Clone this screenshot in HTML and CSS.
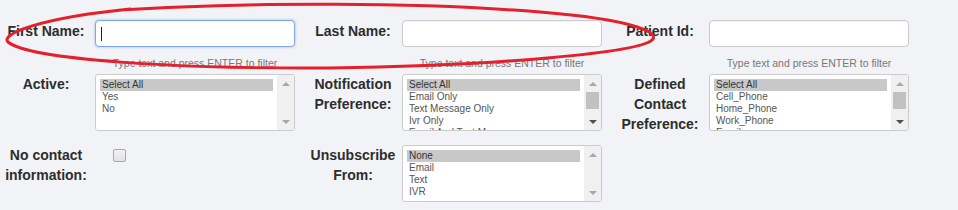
FILE: index.html
```html
<!DOCTYPE html>
<html>
<head>
<meta charset="utf-8">
<link rel="stylesheet" href="styles.css">
</head>
<body>
<div class="page">
  <div class="row r1">
    <div class="group">
      <div class="lbl">First Name:</div>
      <div class="field">
        <div class="input-wrap"><div class="text focus"></div><span class="caret"></span></div>
        <div class="help">Type text and press ENTER to filter</div>
      </div>
    </div>
    <div class="group">
      <div class="lbl">Last Name:</div>
      <div class="field">
        <div class="input-wrap"><div class="text"></div></div>
        <div class="help">Type text and press ENTER to filter</div>
      </div>
    </div>
    <div class="group">
      <div class="lbl">Patient Id:</div>
      <div class="field">
        <div class="input-wrap"><div class="text"></div></div>
        <div class="help">Type text and press ENTER to filter</div>
      </div>
    </div>
  </div>

  <div class="row r2">
    <div class="group">
      <div class="lbl">Active:</div>
      <div class="field">
        <div class="listbox">
          <ul class="opts"><li class="sel">Select All</li><li>Yes</li><li>No</li></ul>
          <div class="sb"><span class="arr"><i class="up"></i></span><span class="track"></span><span class="arr"><i class="down"></i></span></div>
        </div>
      </div>
    </div>
    <div class="group">
      <div class="lbl">Notification<br>Preference:</div>
      <div class="field">
        <div class="listbox">
          <ul class="opts"><li class="sel">Select All</li><li>Email Only</li><li>Text Message Only</li><li>Ivr Only</li><li>Email And Text Message</li></ul>
          <div class="sb"><span class="arr"><i class="up"></i></span><span class="track"><span class="thumb"></span></span><span class="arr"><i class="down on"></i></span></div>
        </div>
      </div>
    </div>
    <div class="group">
      <div class="lbl">Defined<br>Contact<br>Preference:</div>
      <div class="field">
        <div class="listbox">
          <ul class="opts"><li class="sel">Select All</li><li>Cell_Phone</li><li>Home_Phone</li><li>Work_Phone</li><li>Email</li></ul>
          <div class="sb"><span class="arr"><i class="up"></i></span><span class="track"><span class="thumb"></span></span><span class="arr"><i class="down on"></i></span></div>
        </div>
      </div>
    </div>
  </div>

  <div class="row r3">
    <div class="group">
      <div class="lbl">No contact<br>information:</div>
      <div class="field">
        <span class="checkbox"></span>
      </div>
    </div>
    <div class="group">
      <div class="lbl">Unsubscribe<br>From:</div>
      <div class="field">
        <div class="listbox">
          <ul class="opts"><li class="sel">None</li><li>Email</li><li>Text</li><li>IVR</li></ul>
          <div class="sb"><span class="arr"><i class="up"></i></span><span class="track"></span><span class="arr"><i class="down"></i></span></div>
        </div>
      </div>
    </div>
  </div>
</div>
<svg class="annot" width="958" height="80" viewBox="0 0 958 80">
  <path d="M 120 10 C 250 2, 420 2, 540 12 C 640 20, 660 34, 652 40 C 640 52, 500 66, 330 68 C 180 69, 30 60, 8 42 C 0 34, 40 18, 130 9" fill="none" stroke="#e3202b" stroke-width="3" stroke-linecap="round"/>
</svg>
</body>
</html>
```

FILE: styles.css
```css
html, body {
  margin: 0;
  padding: 0;
  background: #f2f3f7;
}
body {
  font-family: "Liberation Sans", Arial, sans-serif;
  color: #2d2d2d;
  position: relative;
  width: 958px;
  height: 210px;
  overflow: hidden;
}
.page {
  display: flex;
  flex-direction: column;
}
.row {
  display: flex;
  align-items: flex-start;
}
.r1 { margin-top: 20px; }
.r2 { margin-top: 4px; }
.r3 { margin-top: 11px; }
.group {
  display: flex;
  align-items: flex-start;
  width: 307px;
  flex: none;
}
.lbl {
  width: 92px;
  margin-right: 3px;
  text-align: center;
  font-weight: bold;
  font-size: 14px;
  line-height: 20px;
  color: #2d2d2d;
}
.r1 .lbl { padding-top: 1px; }
.field {
  width: 200px;
  display: flex;
  flex-direction: column;
}
.input-wrap {
  position: relative;
}
.text {
  box-sizing: border-box;
  width: 200px;
  height: 27px;
  background: #fff;
  border: 1px solid #cbcbcb;
  border-radius: 4px;
  box-shadow: inset 0 1px 1px rgba(0,0,0,.05);
}
.text.focus {
  border-color: #7fa8e6;
  box-shadow: inset 0 1px 1px rgba(0,0,0,.05), 0 0 3px rgba(102,150,233,.6);
}
.caret {
  position: absolute;
  left: 6px;
  top: 7px;
  width: 1px;
  height: 14px;
  background: #222;
}
.help {
  margin-top: 9px;
  font-size: 10.5px;
  line-height: 14px;
  color: #777;
  text-align: center;
  white-space: nowrap;
}
.listbox {
  box-sizing: border-box;
  width: 200px;
  height: 57px;
  background: #fff;
  border: 1px solid #cbcbcb;
  border-radius: 3px;
  display: flex;
  overflow: hidden;
}
.opts {
  list-style: none;
  margin: 0;
  padding: 4px 4px 0 4px;
  flex: 1;
  overflow: hidden;
}
.opts li {
  height: 12px;
  line-height: 12px;
  font-size: 10px;
  padding-left: 2px;
  color: #555;
  white-space: nowrap;
}
.opts li.sel {
  background: #c8c8c8;
  color: #333;
}
.sb {
  width: 17px;
  background: #f0f0f0;
  display: flex;
  flex-direction: column;
}
.arr {
  height: 17px;
  display: flex;
  align-items: center;
  justify-content: center;
  flex: none;
}
.track {
  flex: 1;
  display: flex;
  flex-direction: column;
  align-items: center;
}
.thumb {
  width: 13px;
  height: 17px;
  background: #c1c1c1;
}
.up, .down {
  display: block;
  width: 0;
  height: 0;
  border-left: 4px solid transparent;
  border-right: 4px solid transparent;
}
.up { border-bottom: 4px solid #a8a8a8; }
.down { border-top: 4px solid #a8a8a8; }
.down.on { border-top-color: #505050; }
.checkbox {
  display: block;
  box-sizing: border-box;
  width: 13px;
  height: 13px;
  margin-left: 18px;
  margin-top: 4px;
  border: 1px solid #a9a9a9;
  border-radius: 2px;
  background: linear-gradient(#f2f2f2, #e2e2e2);
}
.annot {
  position: absolute;
  left: 0;
  top: 0;
  pointer-events: none;
}
```
